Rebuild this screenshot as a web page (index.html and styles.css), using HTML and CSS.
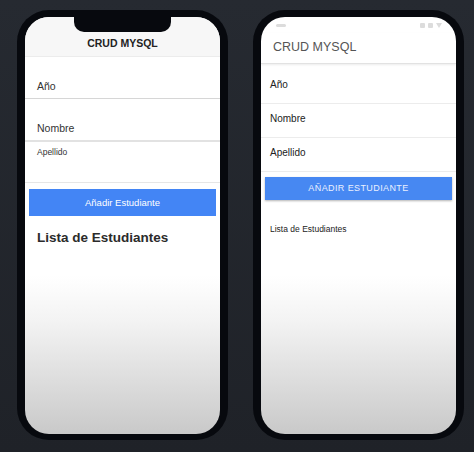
FILE: index.html
```html
<!DOCTYPE html>
<html lang="es">

<head>
    <meta charset="UTF-8">
    <meta name="viewport" content="width=device-width, initial-scale=1.0">
    <title>CRUD MYSQL</title>
    <link rel="stylesheet" href="styles.css">
</head>

<body>
    <div class="phones">
        <!-- iOS -->
        <div class="frame">
            <div class="screen">
                <div class="notch"></div>
                <div class="ios-head">CRUD MYSQL</div>
                <div class="ios-field">Año</div>
                <div class="ios-field ios-field2">Nombre</div>
                <div class="ios-area">Apellido</div>
                <div class="ios-btn">Añadir Estudiante</div>
                <h2 class="ios-title">Lista de Estudiantes</h2>
            </div>
        </div>
        <!-- Android -->
        <div class="frame">
            <div class="screen">
                <div class="status">
                    <span class="pill"></span>
                    <span class="icons"><i></i><i></i><b></b></span>
                </div>
                <div class="md-head">CRUD MYSQL</div>
                <div class="md-list">
                    <div class="md-field">Año</div>
                    <div class="md-field">Nombre</div>
                    <div class="md-field">Apellido</div>
                </div>
                <div class="md-btn">Añadir Estudiante</div>
                <p class="md-title">Lista de Estudiantes</p>
            </div>
        </div>
    </div>
</body>

</html>
```

FILE: styles.css
```css
* {
    margin: 0;
    padding: 0;
    box-sizing: border-box;
}

body {
    width: 474px;
    height: 452px;
    background: linear-gradient(#262a31, #1f2228);
    font-family: "Liberation Sans", Arial, sans-serif;
    overflow: hidden;
}

.phones {
    display: flex;
    gap: 25px;
    padding: 10px 0 0 17px;
}

.frame {
    width: 211px;
    height: 430px;
    background: #07090e;
    border-radius: 32px;
    padding: 7px 8px 6px;
}

.screen {
    position: relative;
    height: 100%;
    border-radius: 24px;
    overflow: hidden;
    background: linear-gradient(#fff 0, #fff 62%, #f3f3f3 73%, #c9c9c9 100%);
}

/* iOS */
.notch {
    position: absolute;
    top: 0;
    left: 49px;
    width: 97px;
    height: 15px;
    background: #07090e;
    border-radius: 0 0 10px 10px;
}

.ios-head {
    height: 40px;
    padding-top: 19px;
    line-height: 14px;
    text-align: center;
    font-size: 10.5px;
    font-weight: bold;
    color: #222;
    background: #f7f7f7;
    border-bottom: 1px solid #ececec;
}

.ios-field {
    height: 42px;
    padding: 22px 0 0 12px;
    line-height: 14px;
    font-size: 10.5px;
    color: #333;
    border-bottom: 1px solid #d6d6d6;
}

.ios-field2 {
    height: 43px;
    border-bottom: 2px solid #e2e2e2;
}

.ios-area {
    height: 41px;
    padding: 5px 0 0 12px;
    line-height: 11px;
    font-size: 8.5px;
    color: #333;
    border-bottom: 1px solid #e6e6e6;
}

.ios-btn {
    margin: 6px 4px 0;
    height: 27px;
    line-height: 27px;
    text-align: center;
    font-size: 9.5px;
    color: #fff;
    background: #4385f5;
}

.ios-title {
    margin-top: 14px;
    padding-left: 12px;
    line-height: 16px;
    font-size: 13.5px;
    font-weight: bold;
    color: #2b2b2b;
}

/* Android */
.status {
    height: 16px;
    display: flex;
    justify-content: space-between;
    align-items: center;
    padding: 0 14px 0 15px;
}

.pill {
    width: 10px;
    height: 3px;
    border-radius: 2px;
    background: #dcdcdc;
}

.icons {
    display: flex;
    gap: 3px;
    align-items: center;
}

.icons i {
    width: 5px;
    height: 5px;
    border-radius: 1px;
    background: #dcdcdc;
}

.icons b {
    width: 0;
    height: 0;
    border-left: 3px solid transparent;
    border-right: 3px solid transparent;
    border-top: 5px solid #dcdcdc;
}

.md-head {
    height: 31px;
    padding: 7px 0 0 12px;
    line-height: 15px;
    font-size: 12.5px;
    color: #555;
    border-bottom: 1px solid #e2e2e2;
    box-shadow: 0 1px 2px rgba(0, 0, 0, .08);
}

.md-list {
    padding-top: 6px;
}

.md-field {
    height: 34px;
    padding: 8px 0 0 9px;
    line-height: 14px;
    font-size: 10px;
    color: #222;
    border-bottom: 1px solid #ececec;
}

.md-btn {
    margin: 5px 4px 0;
    height: 23px;
    line-height: 23px;
    text-align: center;
    font-size: 9px;
    letter-spacing: .4px;
    text-transform: uppercase;
    color: #eaf0ff;
    background: #4788f2;
    box-shadow: 0 1px 2px rgba(0, 0, 0, .3);
}

.md-title {
    margin-top: 24px;
    padding-left: 9px;
    line-height: 11px;
    font-size: 8.5px;
    color: #222;
}
```
